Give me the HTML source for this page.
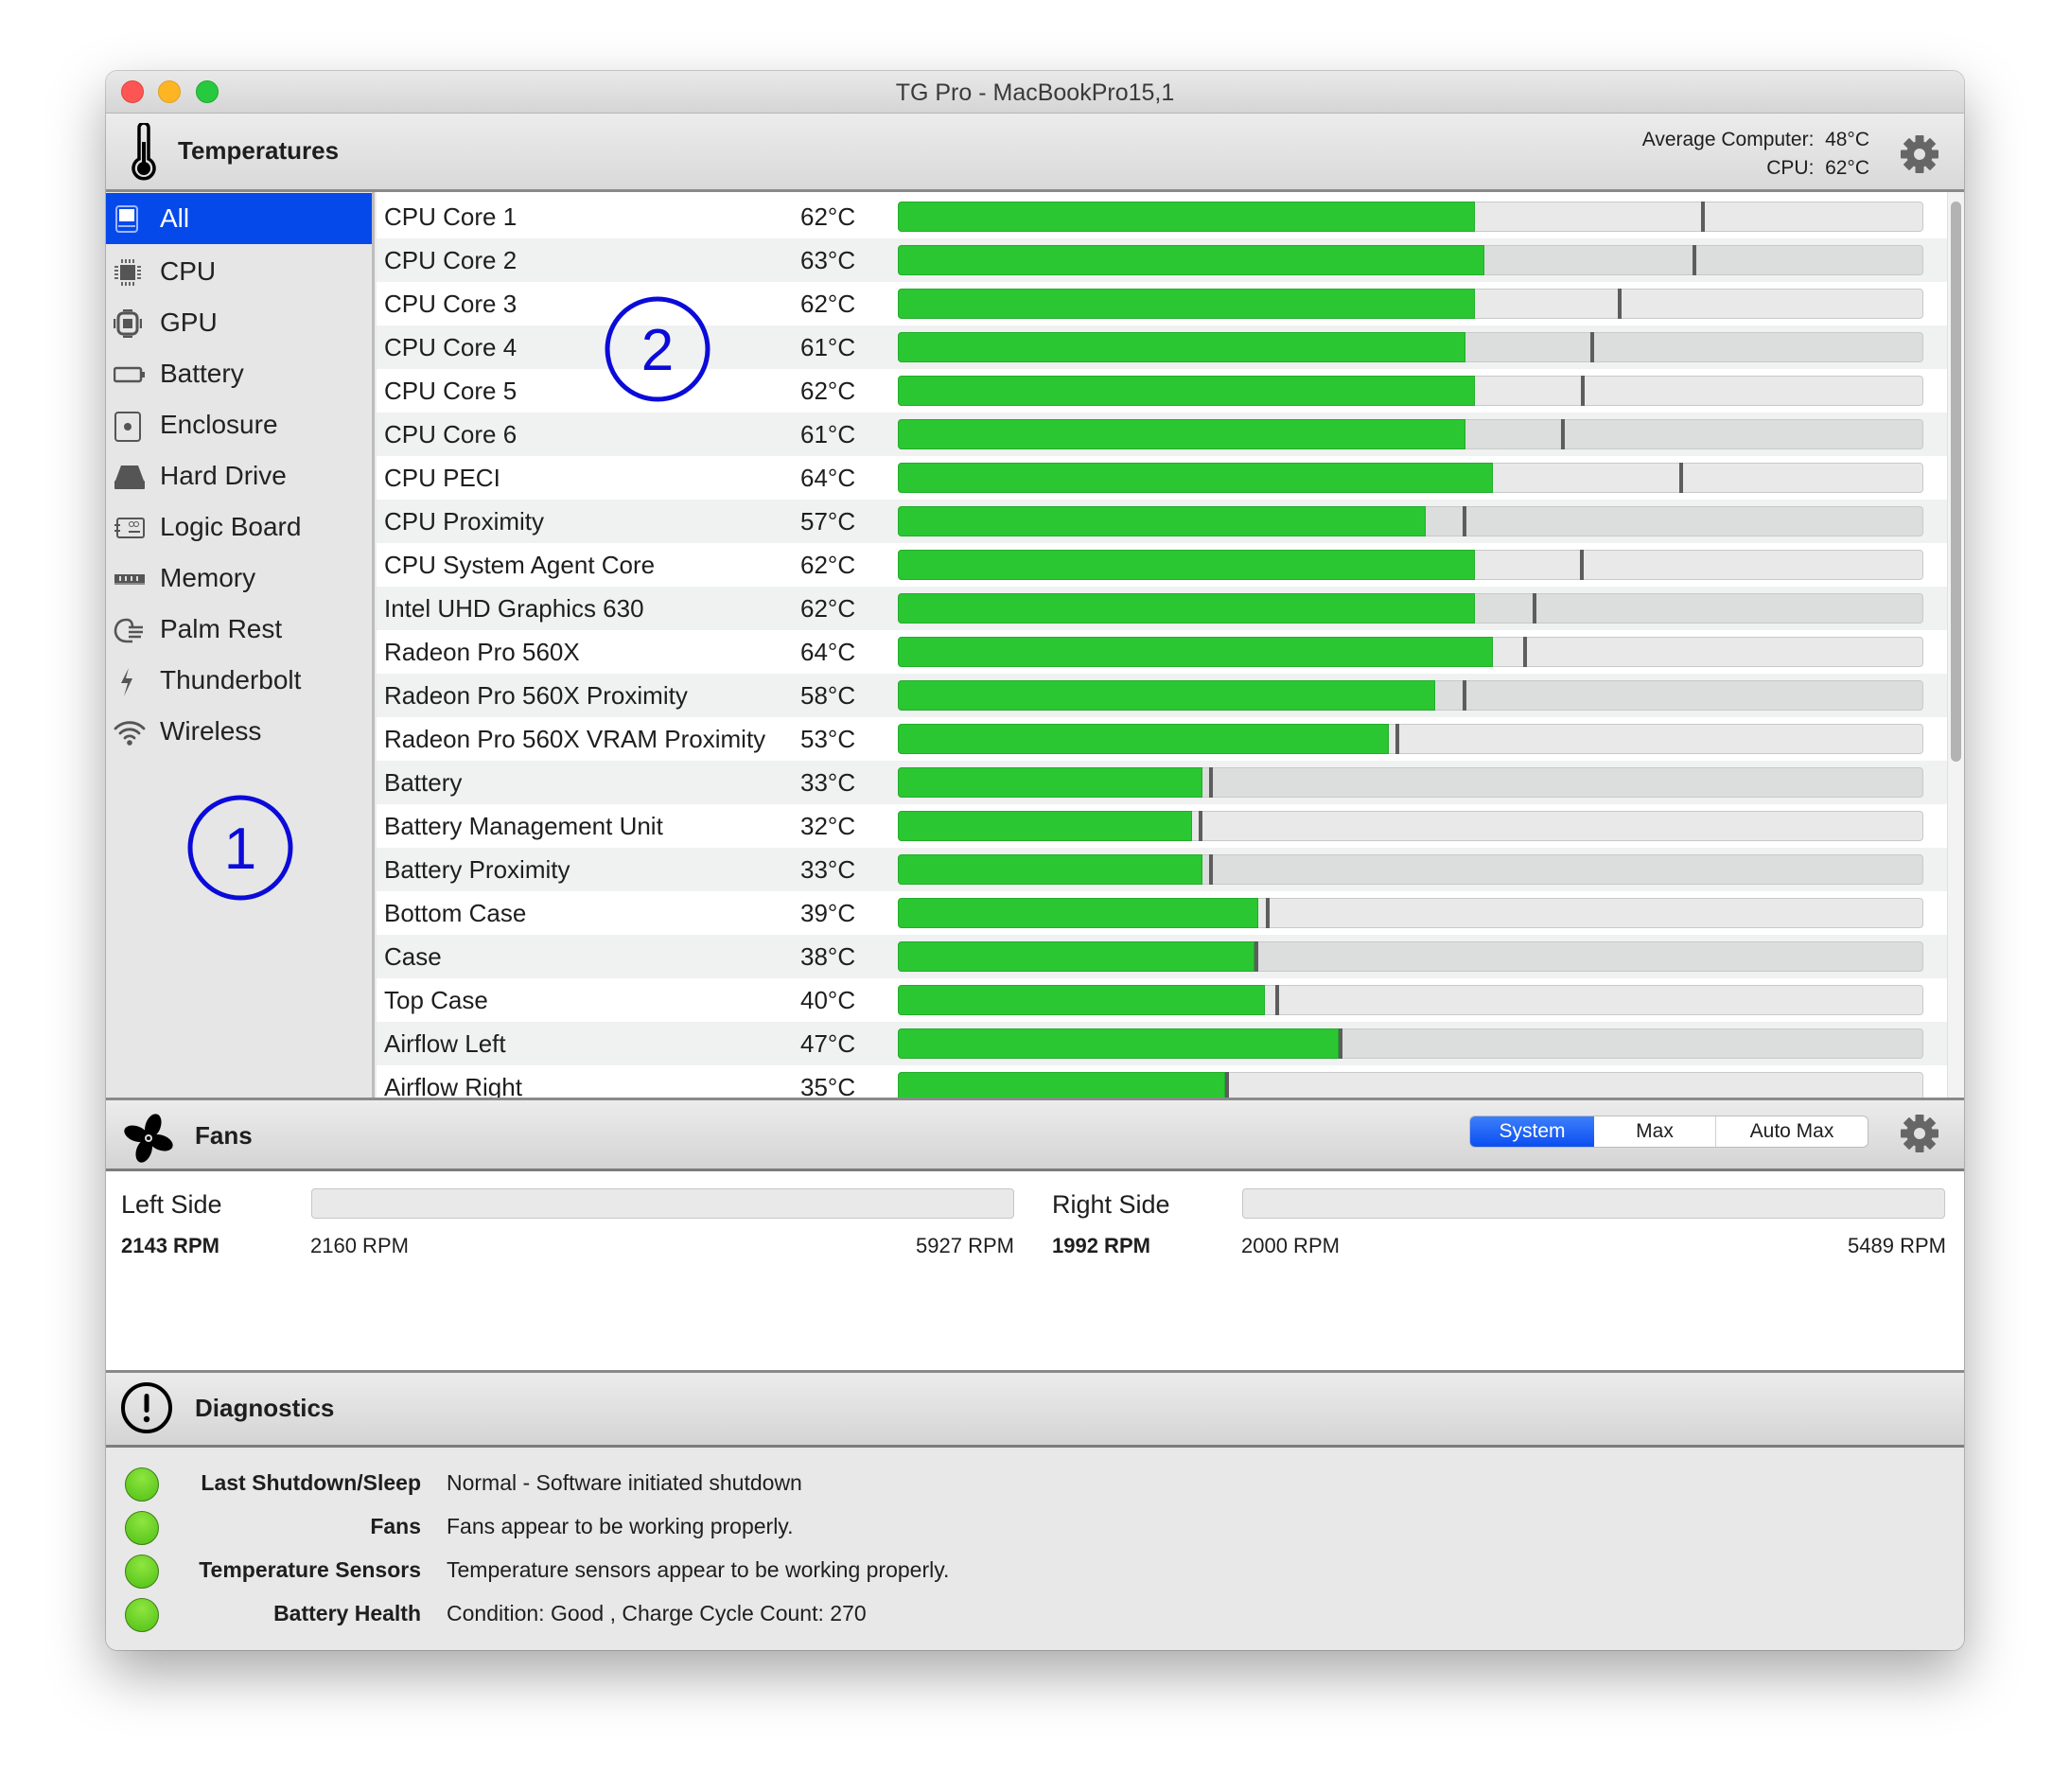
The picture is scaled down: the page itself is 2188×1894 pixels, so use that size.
<!DOCTYPE html>
<html><head><meta charset="utf-8">
<style>
*{box-sizing:border-box;margin:0;padding:0}
body{width:2188px;height:1894px;background:#fff;font-family:"Liberation Sans",sans-serif;color:#1e1e1e;position:relative;overflow:hidden}
.win{position:absolute;left:112px;top:75px;width:1964px;height:1669px;border-radius:12px;overflow:hidden;box-shadow:0 25px 60px rgba(0,0,0,.35),0 0 0 1px rgba(0,0,0,.18);background:#ececec}
.abs{position:absolute}
.titlebar{left:0;top:0;width:1964px;height:45px;background:linear-gradient(#e9e9e9,#d5d5d5);border-bottom:1px solid #b5b5b5}
.tl{position:absolute;top:10px;width:24px;height:24px;border-radius:50%}
.title{position:absolute;top:1px;left:0;width:100%;text-align:center;line-height:45px;font-size:25px;color:#3a3a3a}
.toolbar{left:0;top:45px;width:1964px;height:83px;background:linear-gradient(#ececec,#d9d9d9);border-bottom:3px solid #8a8a8a}
.side{left:0;top:128px;width:284px;height:1032px;background:#e6e6e6;border-right:3px solid #bdbdbd}
.si{position:absolute;left:0;width:281px;height:54px;font-size:28px;line-height:54px;padding-left:57px;color:#222}
.si svg{position:absolute;left:8px;top:13px}
.table{left:286px;top:128px;width:1660px;height:1032px;background:#fff;overflow:hidden}
.row{position:absolute;left:0;width:1660px;height:46px;font-size:26px;line-height:46px;margin-top:3px}
.row.s{background:#f0f1f1}
.row .n{position:absolute;left:8px}
.row .t{position:absolute;left:448px}
.bar{position:absolute;left:551px;top:7px;width:1084px;height:32px;border:1px solid #c9c9c9;border-radius:4px;background:#e9e9e9}
.row.s .bar{background:#dcdddd}
.g{position:absolute;left:-1px;top:-1px;height:32px;background:#2ac732;border:1px solid #22ad2a;border-radius:4px 0 0 4px}
.m{position:absolute;top:-1px;width:4px;height:32px;background:#5d5d5d}
.sb{left:1946px;top:128px;width:18px;height:1032px;background:#f3f3f3;border-left:1px solid #e0e0e0}
.hdr{left:0;width:1964px;background:linear-gradient(#ececec,#d4d4d4);border-top:3px solid #8a8a8a;border-bottom:3px solid #7c7c7c}
.bold{font-weight:bold}
</style></head><body>
<div class="win">
 <div class="abs titlebar">
  <div class="tl" style="left:16px;background:#fd5454;border:1px solid #e0443e"></div>
  <div class="tl" style="left:55px;background:#fdb524;border:1px solid #dea123"></div>
  <div class="tl" style="left:95px;background:#27c93f;border:1px solid #1aab29"></div>
  <div class="title">TG Pro - MacBookPro15,1</div>
 </div>
 <div class="abs toolbar">
  <svg class="abs" style="left:25px;top:10px" width="30" height="62" viewBox="0 0 30 62"><path d="M10 5a5 5 0 0 1 10 0v33a11 11 0 1 1-10 0z" fill="none" stroke="#000" stroke-width="3.5"/><rect x="13" y="20" width="4" height="25" fill="#000"/><circle cx="15" cy="48" r="7" fill="#000"/></svg>
  <div class="abs bold" style="left:76px;top:24px;font-size:26px">Temperatures</div>
  <div class="abs" style="left:1564px;top:13px;width:300px;text-align:right;font-size:21px;line-height:30px">Average Computer:&nbsp; 48°C<br>CPU:&nbsp; 62°C</div>
  <svg class="abs" style="left:1895px;top:21px" width="44" height="44" viewBox="-22 -22 44 44"><g fill="#666"><circle r="14"/><rect x="-4.5" y="-20" width="9" height="40" rx="1"/><rect x="-4.5" y="-20" width="9" height="40" rx="1" transform="rotate(45)"/><rect x="-4.5" y="-20" width="9" height="40" rx="1" transform="rotate(90)"/><rect x="-4.5" y="-20" width="9" height="40" rx="1" transform="rotate(135)"/></g><circle r="6" fill="#e2e2e2"/></svg>
 </div>

 <div class="abs side">
  <div class="si" style="top:1px;background:#0549eb;color:#fff"><svg width="28" height="30" viewBox="0 0 28 30"><rect x="3" y="1" width="22" height="27" rx="3" fill="none" stroke="#9cb8ff" stroke-width="2"/><rect x="6" y="4" width="16" height="13" fill="#fff"/><line x1="5" y1="22" x2="23" y2="22" stroke="#9cb8ff" stroke-width="2"/></svg>All</div>
  <div class="si" style="top:57px"><svg width="30" height="30" viewBox="0 0 30 30"><rect x="7" y="7" width="16" height="16" fill="#555"/><g stroke="#666" stroke-width="2"><path d="M9 1v4M13 1v4M17 1v4M21 1v4M9 25v4M13 25v4M17 25v4M21 25v4M1 9h4M1 13h4M1 17h4M1 21h4M25 9h4M25 13h4M25 17h4M25 21h4"/></g></svg>CPU</div>
  <div class="si" style="top:111px"><svg width="30" height="30" viewBox="0 0 30 30"><rect x="5" y="4" width="20" height="22" rx="5" fill="none" stroke="#555" stroke-width="3"/><rect x="10" y="10" width="10" height="10" fill="#555"/><path d="M10 1h10M10 29h10M1 10v10M29 10v10" stroke="#555" stroke-width="2.5"/></svg>GPU</div>
  <div class="si" style="top:165px"><svg width="34" height="30" viewBox="0 0 34 30"><rect x="1" y="8" width="28" height="14" rx="2" fill="none" stroke="#555" stroke-width="2.5"/><rect x="29" y="12" width="4" height="6" fill="#555"/></svg>Battery</div>
  <div class="si" style="top:219px"><svg width="30" height="32" viewBox="0 0 30 32"><rect x="2" y="1" width="26" height="30" rx="3" fill="none" stroke="#555" stroke-width="2"/><circle cx="15" cy="16" r="4" fill="#555"/></svg>Enclosure</div>
  <div class="si" style="top:273px"><svg width="34" height="30" viewBox="0 0 34 30"><path d="M8 3h18l6 16H2z" fill="#555"/><rect x="1" y="19" width="32" height="9" rx="1" fill="#555"/></svg>Hard Drive</div>
  <div class="si" style="top:327px"><svg width="34" height="30" viewBox="0 0 34 30"><rect x="4" y="5" width="28" height="20" rx="2" fill="none" stroke="#555" stroke-width="2"/><path d="M1 12h6M1 18h6M16 19h12" stroke="#555" stroke-width="2"/><circle cx="19" cy="11" r="2.5" fill="none" stroke="#555"/><circle cx="24" cy="11" r="2.5" fill="none" stroke="#555"/></svg>Logic Board</div>
  <div class="si" style="top:381px"><svg width="34" height="30" viewBox="0 0 34 30"><rect x="1" y="10" width="32" height="9" fill="#555"/><path d="M7 12v5M13 12v5M19 12v5M25 12v5" stroke="#ddd" stroke-width="2"/><rect x="1" y="19" width="32" height="2" fill="#888"/></svg>Memory</div>
  <div class="si" style="top:435px"><svg width="34" height="30" viewBox="0 0 34 30"><path d="M14 4C4 4 2 12 2 16s3 11 12 11h6M16 12h15M16 17h15M16 22h13M14 4c4 0 6 3 6 8" fill="none" stroke="#555" stroke-width="2.6"/></svg>Palm Rest</div>
  <div class="si" style="top:489px"><svg width="30" height="32" viewBox="0 0 30 32"><path d="M16 1L8 17h7l-4 14 9-19h-7l3-11z" fill="#555"/></svg>Thunderbolt</div>
  <div class="si" style="top:543px"><svg width="34" height="30" viewBox="0 0 34 30"><path d="M2 11a21 21 0 0 1 30 0M7 16a14 14 0 0 1 20 0M12 21a7 7 0 0 1 10 0" fill="none" stroke="#555" stroke-width="2.8" stroke-linecap="round"/><circle cx="17" cy="26" r="2.8" fill="#555"/></svg>Wireless</div>
 </div>

 <div class="abs table">
  <div class="row" style="top:0"><span class="n">CPU Core 1</span><span class="t">62°C</span><div class="bar"><div class="g" style="width:610px"></div><div class="m" style="left:848px"></div></div></div>
  <div class="row s" style="top:46px"><span class="n">CPU Core 2</span><span class="t">63°C</span><div class="bar"><div class="g" style="width:620px"></div><div class="m" style="left:839px"></div></div></div>
  <div class="row" style="top:92px"><span class="n">CPU Core 3</span><span class="t">62°C</span><div class="bar"><div class="g" style="width:610px"></div><div class="m" style="left:760px"></div></div></div>
  <div class="row s" style="top:138px"><span class="n">CPU Core 4</span><span class="t">61°C</span><div class="bar"><div class="g" style="width:600px"></div><div class="m" style="left:731px"></div></div></div>
  <div class="row" style="top:184px"><span class="n">CPU Core 5</span><span class="t">62°C</span><div class="bar"><div class="g" style="width:610px"></div><div class="m" style="left:721px"></div></div></div>
  <div class="row s" style="top:230px"><span class="n">CPU Core 6</span><span class="t">61°C</span><div class="bar"><div class="g" style="width:600px"></div><div class="m" style="left:700px"></div></div></div>
  <div class="row" style="top:276px"><span class="n">CPU PECI</span><span class="t">64°C</span><div class="bar"><div class="g" style="width:629px"></div><div class="m" style="left:825px"></div></div></div>
  <div class="row s" style="top:322px"><span class="n">CPU Proximity</span><span class="t">57°C</span><div class="bar"><div class="g" style="width:558px"></div><div class="m" style="left:596px"></div></div></div>
  <div class="row" style="top:368px"><span class="n">CPU System Agent Core</span><span class="t">62°C</span><div class="bar"><div class="g" style="width:610px"></div><div class="m" style="left:720px"></div></div></div>
  <div class="row s" style="top:414px"><span class="n">Intel UHD Graphics 630</span><span class="t">62°C</span><div class="bar"><div class="g" style="width:610px"></div><div class="m" style="left:670px"></div></div></div>
  <div class="row" style="top:460px"><span class="n">Radeon Pro 560X</span><span class="t">64°C</span><div class="bar"><div class="g" style="width:629px"></div><div class="m" style="left:660px"></div></div></div>
  <div class="row s" style="top:506px"><span class="n">Radeon Pro 560X Proximity</span><span class="t">58°C</span><div class="bar"><div class="g" style="width:568px"></div><div class="m" style="left:596px"></div></div></div>
  <div class="row" style="top:552px"><span class="n">Radeon Pro 560X VRAM Proximity</span><span class="t">53°C</span><div class="bar"><div class="g" style="width:519px"></div><div class="m" style="left:525px"></div></div></div>
  <div class="row s" style="top:598px"><span class="n">Battery</span><span class="t">33°C</span><div class="bar"><div class="g" style="width:322px"></div><div class="m" style="left:328px"></div></div></div>
  <div class="row" style="top:644px"><span class="n">Battery Management Unit</span><span class="t">32°C</span><div class="bar"><div class="g" style="width:311px"></div><div class="m" style="left:317px"></div></div></div>
  <div class="row s" style="top:690px"><span class="n">Battery Proximity</span><span class="t">33°C</span><div class="bar"><div class="g" style="width:322px"></div><div class="m" style="left:328px"></div></div></div>
  <div class="row" style="top:736px"><span class="n">Bottom Case</span><span class="t">39°C</span><div class="bar"><div class="g" style="width:381px"></div><div class="m" style="left:388px"></div></div></div>
  <div class="row s" style="top:782px"><span class="n">Case</span><span class="t">38°C</span><div class="bar"><div class="g" style="width:377px"></div><div class="m" style="left:376px"></div></div></div>
  <div class="row" style="top:828px"><span class="n">Top Case</span><span class="t">40°C</span><div class="bar"><div class="g" style="width:388px"></div><div class="m" style="left:398px"></div></div></div>
  <div class="row s" style="top:874px"><span class="n">Airflow Left</span><span class="t">47°C</span><div class="bar"><div class="g" style="width:466px"></div><div class="m" style="left:465px"></div></div></div>
  <div class="row" style="top:920px"><span class="n">Airflow Right</span><span class="t">35°C</span><div class="bar"><div class="g" style="width:346px"></div><div class="m" style="left:345px"></div></div></div>
 </div>
 <div class="abs sb"><div class="abs" style="left:3px;top:10px;width:11px;height:592px;border-radius:6px;background:#b3b3b3"></div></div>

 <svg class="abs" style="left:525px;top:236px" width="120" height="120" viewBox="0 0 120 120"><circle cx="58" cy="58" r="53" fill="none" stroke="#0b0bd9" stroke-width="5"/><text x="58" y="80" text-anchor="middle" font-family="Liberation Sans,sans-serif" font-size="62" fill="#0b0bd9">2</text></svg>
 <svg class="abs" style="left:84px;top:763px" width="120" height="120" viewBox="0 0 120 120"><circle cx="58" cy="58" r="53" fill="none" stroke="#0b0bd9" stroke-width="5"/><text x="58" y="80" text-anchor="middle" font-family="Liberation Sans,sans-serif" font-size="62" fill="#0b0bd9">1</text></svg>

 <div class="abs hdr" style="top:1085px;height:78px">
  <svg class="abs" style="left:15px;top:12px" width="60" height="56" viewBox="-30 -28 60 56"><g fill="#000"><ellipse cx="0" cy="-14" rx="8" ry="13" transform="rotate(20)"/><ellipse cx="0" cy="-14" rx="8" ry="13" transform="rotate(110)"/><ellipse cx="0" cy="-14" rx="8" ry="13" transform="rotate(200)"/><ellipse cx="0" cy="-14" rx="8" ry="13" transform="rotate(290)"/></g><circle r="4" fill="#ddd"/><circle r="2" fill="#000"/></svg>
  <div class="abs bold" style="left:94px;top:22px;font-size:26px">Fans</div>
  <div class="abs" style="left:1441px;top:16px;width:422px;height:34px;border:1px solid #bdbdbd;border-radius:6px;background:#fff;font-size:21px;line-height:32px;overflow:hidden">
   <div class="abs" style="left:0;top:0;width:131px;height:32px;background:linear-gradient(#3d7ff9,#0b4ef2);color:#fff;text-align:center">System</div>
   <div class="abs" style="left:131px;top:0;width:129px;height:32px;text-align:center;border-right:1px solid #d0d0d0">Max</div>
   <div class="abs" style="left:260px;top:0;width:160px;height:32px;text-align:center">Auto Max</div>
  </div>
  <svg class="abs" style="left:1895px;top:13px" width="44" height="44" viewBox="-22 -22 44 44"><g fill="#666"><circle r="14"/><rect x="-4.5" y="-20" width="9" height="40" rx="1"/><rect x="-4.5" y="-20" width="9" height="40" rx="1" transform="rotate(45)"/><rect x="-4.5" y="-20" width="9" height="40" rx="1" transform="rotate(90)"/><rect x="-4.5" y="-20" width="9" height="40" rx="1" transform="rotate(135)"/></g><circle r="6" fill="#e2e2e2"/></svg>
 </div>
 <div class="abs" style="left:0;top:1163px;width:1964px;height:210px;background:#fff">
  <div class="abs" style="left:16px;top:20px;font-size:27px">Left Side</div>
  <div class="abs" style="left:217px;top:18px;width:743px;height:32px;border:1px solid #c6c6c6;border-radius:4px;background:#e9e9e9"></div>
  <div class="abs bold" style="left:16px;top:66px;font-size:22px">2143 RPM</div>
  <div class="abs" style="left:216px;top:66px;font-size:22px">2160 RPM</div>
  <div class="abs" style="left:760px;top:66px;width:200px;text-align:right;font-size:22px">5927 RPM</div>
  <div class="abs" style="left:1000px;top:20px;font-size:27px">Right Side</div>
  <div class="abs" style="left:1201px;top:18px;width:743px;height:32px;border:1px solid #c6c6c6;border-radius:4px;background:#e9e9e9"></div>
  <div class="abs bold" style="left:1000px;top:66px;font-size:22px">1992 RPM</div>
  <div class="abs" style="left:1200px;top:66px;font-size:22px">2000 RPM</div>
  <div class="abs" style="left:1745px;top:66px;width:200px;text-align:right;font-size:22px">5489 RPM</div>
 </div>

 <div class="abs hdr" style="top:1373px;height:82px">
  <svg class="abs" style="left:15px;top:9px" width="56" height="56" viewBox="0 0 56 56"><circle cx="28" cy="28" r="25" fill="none" stroke="#000" stroke-width="4"/><rect x="25.5" y="13" width="5" height="20" rx="2.5" fill="#000"/><circle cx="28" cy="40" r="3.2" fill="#000"/></svg>
  <div class="abs bold" style="left:94px;top:22px;font-size:26px">Diagnostics</div>
 </div>
 <div class="abs" style="left:0;top:1455px;width:1964px;height:214px;background:#e8e8e8;font-size:23px">
  <div class="abs" style="left:20px;top:21px;width:36px;height:36px;border-radius:50%;background:radial-gradient(circle at 50% 30%,#8ee63f,#4fbf15);border:1px solid #3d7d15"></div>
  <div class="abs" style="left:20px;top:67px;width:36px;height:36px;border-radius:50%;background:radial-gradient(circle at 50% 30%,#8ee63f,#4fbf15);border:1px solid #3d7d15"></div>
  <div class="abs" style="left:20px;top:113px;width:36px;height:36px;border-radius:50%;background:radial-gradient(circle at 50% 30%,#8ee63f,#4fbf15);border:1px solid #3d7d15"></div>
  <div class="abs" style="left:20px;top:159px;width:36px;height:36px;border-radius:50%;background:radial-gradient(circle at 50% 30%,#8ee63f,#4fbf15);border:1px solid #3d7d15"></div>
  <div class="abs bold" style="left:60px;top:24px;width:273px;text-align:right">Last Shutdown/Sleep</div>
  <div class="abs bold" style="left:60px;top:70px;width:273px;text-align:right">Fans</div>
  <div class="abs bold" style="left:60px;top:116px;width:273px;text-align:right">Temperature Sensors</div>
  <div class="abs bold" style="left:60px;top:162px;width:273px;text-align:right">Battery Health</div>
  <div class="abs" style="left:360px;top:24px">Normal - Software initiated shutdown</div>
  <div class="abs" style="left:360px;top:70px">Fans appear to be working properly.</div>
  <div class="abs" style="left:360px;top:116px">Temperature sensors appear to be working properly.</div>
  <div class="abs" style="left:360px;top:162px">Condition: Good , Charge Cycle Count: 270</div>
 </div>
</div>
</body></html>
